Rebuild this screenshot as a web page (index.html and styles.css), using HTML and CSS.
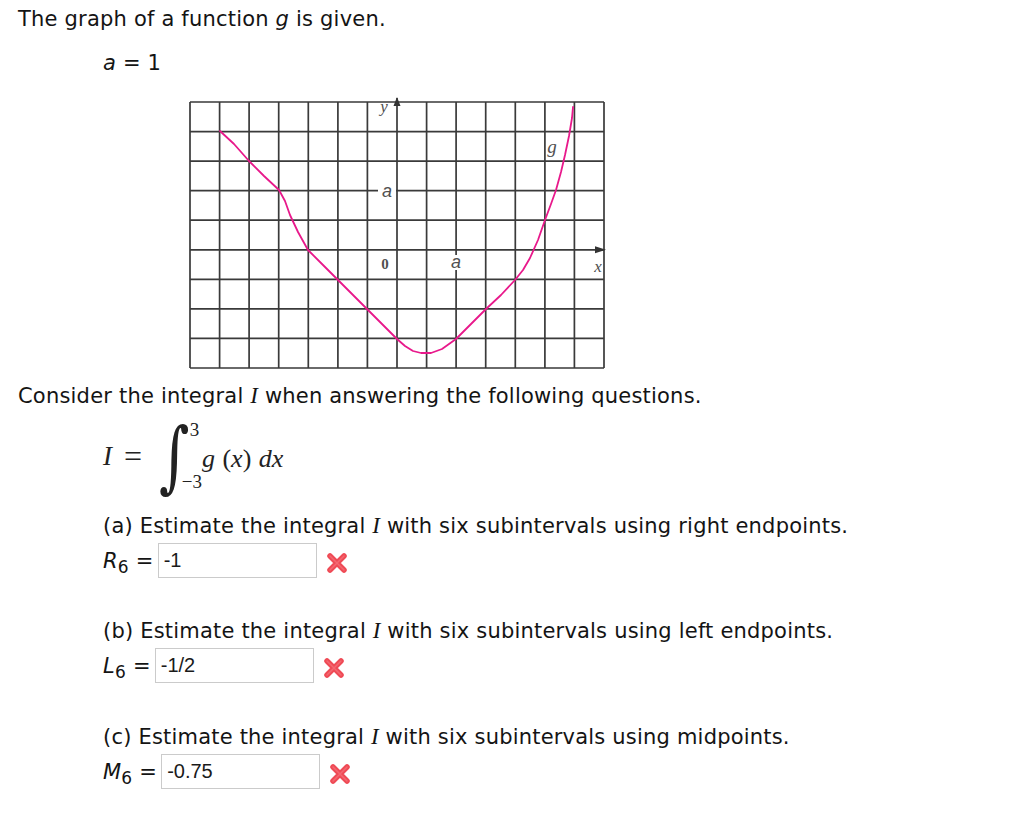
FILE: index.html
```html
<!DOCTYPE html>
<html>
<head>
<meta charset="utf-8">
<link rel="stylesheet" href="styles.css">
</head>
<body>
<div class="page">
  <p class="intro">The graph of a function <i class="vi">g</i> is given.</p>
  <p class="aval indent"><i class="vi">a</i> = 1</p>
  <div class="graph">
    <svg width="426" height="278" viewBox="0 0 426 278" xmlns="http://www.w3.org/2000/svg">
      <g stroke="#3a3a3a" stroke-width="1.7" fill="none">
        <path d="M4 6V272M33.6 6V272M63.1 6V272M92.7 6V272M122.3 6V272M151.9 6V272M181.4 6V272M211 6V272M240.6 6V272M270.1 6V272M299.7 6V272M329.3 6V272M358.9 6V272M388.4 6V272M418 6V272"/>
        <path d="M4 6H418M4 35.6H418M4 65.1H418M4 94.7H418M4 124.2H418M4 153.8H418M4 183.3H418M4 212.9H418M4 242.4H418M4 272H418"/>
      </g>
      <path d="M211 6V2" stroke="#3a3a3a" stroke-width="1.7"/>
      <path d="M211 1L207.5 10L214.5 10Z" fill="#333"/>
      <path d="M409 150.3L420 153.8L409 157.3Z" fill="#333"/>
      <rect x="192" y="86" width="18" height="18" fill="#fff"/>
      <rect x="261" y="159" width="18" height="15" fill="#fff"/>
      <text x="201" y="101" class="glbl sans">a</text>
      <text x="270" y="172" class="glbl sans">a</text>
      <text x="199" y="173" class="glbl zero">0</text>
      <text x="198" y="16" class="glbl ital">y</text>
      <text x="412" y="176" class="glbl ital">x</text>
      <text x="366" y="57" class="glbl ital gg">g</text>
      <polyline fill="none" stroke="#e8198b" stroke-width="1.8" stroke-linejoin="round" stroke-linecap="round"
        points="34,35 48,48 63,65 78,80 93,94 99,105 104,119 112,136 122,154 137,169 152,184 166,198 181,213 196,228 211,243 219,250 227,255 235,257 245,257 256,253 270,243 285,228 300,213 315,199 329,184 337,174 344,162 352,144 359,124 365,108 370,94 375,76 379,59 383,40 386,22 387,11"/>
    </svg>
  </div>
  <p class="consider">Consider the integral <i class="mvar">I</i> when answering the following questions.</p>
  <div class="formula indent">
    <span class="fvar">I</span>
    <span class="feq">=</span>
    <span class="fint">∫</span>
    <span class="limits"><span class="lim-up">3</span><span class="lim-lo">−3</span></span>
    <span class="fexpr"><i>g</i> (<i>x</i>) <i>dx</i></span>
  </div>

  <div class="question indent q-a">
    <p class="qtext">(a) Estimate the integral <i class="mvar">I</i> with six subintervals using right endpoints.</p>
    <div class="answer">
      <span class="lbl"><i>R</i><sub>6</sub></span><span class="eq">=</span>
      <div class="inbox">-1</div>
      <svg class="xmark" width="24" height="24" viewBox="0 0 24 24"><path d="M5 5L19 19M19 5L5 19" stroke="#ef4a55" stroke-width="5.5" stroke-linecap="round"/><path d="M5 5L19 19M19 5L5 19" stroke="#f77d85" stroke-width="1.5" stroke-linecap="round" opacity="0.6"/></svg>
    </div>
  </div>

  <div class="question indent q-b">
    <p class="qtext">(b) Estimate the integral <i class="mvar">I</i> with six subintervals using left endpoints.</p>
    <div class="answer">
      <span class="lbl"><i>L</i><sub>6</sub></span><span class="eq">=</span>
      <div class="inbox">-1/2</div>
      <svg class="xmark" width="24" height="24" viewBox="0 0 24 24"><path d="M5 5L19 19M19 5L5 19" stroke="#ef4a55" stroke-width="5.5" stroke-linecap="round"/><path d="M5 5L19 19M19 5L5 19" stroke="#f77d85" stroke-width="1.5" stroke-linecap="round" opacity="0.6"/></svg>
    </div>
  </div>

  <div class="question indent q-c">
    <p class="qtext">(c) Estimate the integral <i class="mvar">I</i> with six subintervals using midpoints.</p>
    <div class="answer">
      <span class="lbl"><i>M</i><sub>6</sub></span><span class="eq">=</span>
      <div class="inbox">-0.75</div>
      <svg class="xmark" width="24" height="24" viewBox="0 0 24 24"><path d="M5 5L19 19M19 5L5 19" stroke="#ef4a55" stroke-width="5.5" stroke-linecap="round"/><path d="M5 5L19 19M19 5L5 19" stroke="#f77d85" stroke-width="1.5" stroke-linecap="round" opacity="0.6"/></svg>
    </div>
  </div>
</div>
</body>
</html>
```

FILE: styles.css
```css
html, body {
  margin: 0;
  padding: 0;
  background: #fff;
}
.page {
  padding-left: 18px;
  font-family: "DejaVu Sans", Verdana, sans-serif;
  font-size: 21px;
  letter-spacing: 0.2px;
  line-height: 24px;
  color: #141414;
}
p {
  margin: 0;
}
.indent {
  margin-left: 85px;
}
.vi {
  font-style: italic;
}
.mvar {
  font-family: "Liberation Serif", serif;
  font-style: italic;
  font-size: 23px;
  letter-spacing: 0;
}
.intro {
  padding-top: 7px;
}
.aval {
  margin-top: 20px;
}
.graph {
  margin-top: 21px;
  margin-left: 168px;
  height: 278px;
}
.graph svg {
  display: block;
}
.glbl {
  fill: #505050;
  text-anchor: middle;
}
.sans {
  font-family: "Liberation Sans", Arial, sans-serif;
  font-size: 18px;
  font-style: italic;
}
.zero {
  font-family: "Liberation Serif", serif;
  font-size: 15px;
  font-weight: bold;
}
.ital {
  font-family: "Liberation Serif", serif;
  font-style: italic;
  font-size: 17px;
}
.gg {
  font-size: 19px;
}
.consider {
  margin-top: 10px;
}
.formula {
  margin-top: 10px;
  height: 76px;
  display: flex;
  align-items: center;
  color: #222;
  letter-spacing: 0;
}
.fvar {
  font-family: "Liberation Serif", serif;
  font-style: italic;
  font-size: 27px;
}
.feq {
  font-family: "Liberation Serif", serif;
  font-size: 32px;
  margin-left: 12px;
}
.fint {
  font-family: "DejaVu Serif", serif;
  font-size: 78px;
  line-height: 76px;
  margin-left: 12px;
  transform: scaleX(0.75);
}
.limits {
  display: flex;
  flex-direction: column;
  justify-content: space-between;
  height: 70px;
  font-family: "Liberation Serif", serif;
  font-size: 19px;
  line-height: 18px;
  margin-left: -13px;
}
.lim-up {
  margin-left: 8px;
}
.lim-lo {
  margin-left: 0;
}
.fexpr {
  font-family: "Liberation Serif", serif;
  font-size: 26px;
  word-spacing: 1px;
  margin-left: 0;
  margin-top: 6px;
}
.q-a {
  margin-top: 20px;
}
.q-b {
  margin-top: 41px;
}
.q-c {
  margin-top: 42px;
}
.answer {
  margin-top: 5px;
  display: flex;
  align-items: center;
  height: 35px;
}
.lbl i {
  font-style: italic;
}
.lbl sub {
  font-size: 17px;
  vertical-align: -5px;
  line-height: 0;
}
.eq {
  margin-left: 7px;
}
.inbox {
  margin-left: 4px;
  box-sizing: border-box;
  width: 159px;
  height: 35px;
  border: 1px solid #cbcbcb;
  padding: 5px 5px;
  font-family: "Liberation Sans", Arial, sans-serif;
  font-size: 20px;
  letter-spacing: 0;
  line-height: 22px;
  color: #1a1a1a;
}
.xmark {
  margin-left: 8px;
  margin-top: 5px;
  display: block;
}
```
